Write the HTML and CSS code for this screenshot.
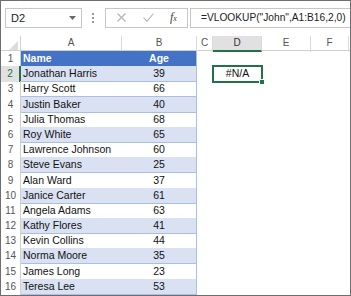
FILE: index.html
```html
<!DOCTYPE html>
<html lang="en">
<head>
    <meta charset="UTF-8">
    <title>VLOOKUP #N/A</title>
    <link rel="stylesheet" href="styles.css">
</head>
<body>
    <div class="window">
        <!-- name box + formula bar -->
        <div class="toolbar">
            <div class="namebox">
                <span>D2</span>
                <svg class="caret" width="7" height="4" viewBox="0 0 7 4"><path d="M0 0h7L3.5 4z" fill="#6a6a6a"/></svg>
            </div>
            <svg class="dots" width="2" height="10" viewBox="0 0 2 10">
                <rect x="0" y="0" width="2" height="2" fill="#9a9a9a"/>
                <rect x="0" y="4" width="2" height="2" fill="#9a9a9a"/>
                <rect x="0" y="8" width="2" height="2" fill="#9a9a9a"/>
            </svg>
            <div class="fbuttons">
                <svg width="9" height="9" viewBox="0 0 9 9"><path d="M0.5 0.5l8 8M8.5 0.5l-8 8" stroke="#b4b4b4" stroke-width="1.1" fill="none"/></svg>
                <svg width="11" height="9" viewBox="0 0 11 9"><path d="M0.5 4.5l3.5 3.8L10.5 0.5" stroke="#b4b4b4" stroke-width="1.1" fill="none"/></svg>
                <span class="fx">f<small>x</small></span>
            </div>
            <div class="formula">=VLOOKUP("John",A1:B16,2,0)</div>
        </div>

        <div class="sheet">
            <div class="row head">
                <div class="corner"></div>
                <div class="ch">A</div>
                <div class="ch">B</div>
                <div class="ch">C</div>
                <div class="ch active">D</div>
                <div class="ch">E</div>
                <div class="ch">F</div>
            </div>
            <div class="row">
                <div class="rh">1</div>
                <div class="cell th">Name</div>
                <div class="cell th num last">Age</div>
                <div></div><div></div><div></div><div></div>
            </div>
            <div class="row band">
                <div class="rh active">2</div>
                <div class="cell">Jonathan Harris</div>
                <div class="cell num last">39</div>
                <div></div>
                <div class="cell selected num">#N/A</div>
                <div></div><div></div>
            </div>
            <div class="row">
                <div class="rh">3</div>
                <div class="cell">Harry Scott</div>
                <div class="cell num last">66</div>
                <div></div><div></div><div></div><div></div>
            </div>
            <div class="row band">
                <div class="rh">4</div>
                <div class="cell">Justin Baker</div>
                <div class="cell num last">40</div>
                <div></div><div></div><div></div><div></div>
            </div>
            <div class="row">
                <div class="rh">5</div>
                <div class="cell">Julia Thomas</div>
                <div class="cell num last">68</div>
                <div></div><div></div><div></div><div></div>
            </div>
            <div class="row band">
                <div class="rh">6</div>
                <div class="cell">Roy White</div>
                <div class="cell num last">65</div>
                <div></div><div></div><div></div><div></div>
            </div>
            <div class="row">
                <div class="rh">7</div>
                <div class="cell">Lawrence Johnson</div>
                <div class="cell num last">60</div>
                <div></div><div></div><div></div><div></div>
            </div>
            <div class="row band">
                <div class="rh">8</div>
                <div class="cell">Steve Evans</div>
                <div class="cell num last">25</div>
                <div></div><div></div><div></div><div></div>
            </div>
            <div class="row">
                <div class="rh">9</div>
                <div class="cell">Alan Ward</div>
                <div class="cell num last">37</div>
                <div></div><div></div><div></div><div></div>
            </div>
            <div class="row band">
                <div class="rh">10</div>
                <div class="cell">Janice Carter</div>
                <div class="cell num last">61</div>
                <div></div><div></div><div></div><div></div>
            </div>
            <div class="row">
                <div class="rh">11</div>
                <div class="cell">Angela Adams</div>
                <div class="cell num last">63</div>
                <div></div><div></div><div></div><div></div>
            </div>
            <div class="row band">
                <div class="rh">12</div>
                <div class="cell">Kathy Flores</div>
                <div class="cell num last">41</div>
                <div></div><div></div><div></div><div></div>
            </div>
            <div class="row">
                <div class="rh">13</div>
                <div class="cell">Kevin Collins</div>
                <div class="cell num last">44</div>
                <div></div><div></div><div></div><div></div>
            </div>
            <div class="row band">
                <div class="rh">14</div>
                <div class="cell">Norma Moore</div>
                <div class="cell num last">35</div>
                <div></div><div></div><div></div><div></div>
            </div>
            <div class="row">
                <div class="rh">15</div>
                <div class="cell">James Long</div>
                <div class="cell num last">23</div>
                <div></div><div></div><div></div><div></div>
            </div>
            <div class="row band">
                <div class="rh">16</div>
                <div class="cell">Teresa Lee</div>
                <div class="cell num last">53</div>
                <div></div><div></div><div></div><div></div>
            </div>
        </div>
    </div>
</body>
</html>
```

FILE: styles.css
```css
*, *::before, *::after {
    box-sizing: border-box;
}

body {
    margin: 0;
    background: #fff;
    font-family: "Liberation Sans", Arial, sans-serif;
}

.window {
    width: 351px;
    height: 296px;
    border: 1px solid #6e6e6e;
    overflow: hidden;
    background: #fff;
}

/* name box and formula bar */
.toolbar {
    display: flex;
    align-items: center;
    height: 35px;
    padding: 6px 0 8px 4px;
}

.namebox {
    display: flex;
    align-items: center;
    justify-content: space-between;
    width: 77px;
    height: 20px;
    padding: 0 5px 0 5px;
    border: 1px solid #c6c6c6;
    font-size: 11px;
    color: #222;
}

.dots {
    margin: 0 11px 0 10px;
}

.fbuttons {
    display: flex;
    align-items: center;
    width: 83px;
    height: 20px;
    padding-left: 11px;
    gap: 17px;
    border: 1px solid #c6c6c6;
}

.fx {
    margin-left: -1px;
    font: italic 12px "Liberation Serif", serif;
    color: #444;
}

.fx small {
    font-size: 8px;
}

.formula {
    flex: 1;
    height: 20px;
    margin-left: 2px;
    padding: 3px 0 0 10px;
    border: 1px solid #c6c6c6;
    border-right: none;
    font-size: 10.2px;
    color: #222;
    white-space: nowrap;
}

/* the grid */
.row {
    display: grid;
    grid-template-columns: 20px 101px 75px 16px 49px 49px 38px;
    height: 15.2px;
}

.row.head {
    height: 15px;
    border-bottom: 1px solid #d0d0d0;
}

.corner {
    position: relative;
    border-right: 1px solid #d0d0d0;
}

.corner::after {
    content: "";
    position: absolute;
    right: 2px;
    bottom: 2px;
    border-style: solid;
    border-width: 0 0 9px 9px;
    border-color: transparent transparent #dcdcdc transparent;
}

.ch {
    border-right: 1px solid #dadada;
    font-size: 10px;
    line-height: 14px;
    text-align: center;
    color: #555;
}

.ch.active {
    background: #e1e1e1;
    border-bottom: 2px solid #217346;
    color: #333;
}

.rh {
    border-right: 1px solid #d0d0d0;
    font-size: 10px;
    line-height: 15px;
    text-align: center;
    color: #555;
}

.rh.active {
    background: #e1e1e1;
    border-right: 2px solid #217346;
    color: #217346;
}

.cell {
    position: relative;
    padding-left: 2px;
    font-size: 10.5px;
    line-height: 15px;
    color: #111;
    white-space: nowrap;
}

.row > .cell:nth-child(2),
.row > .cell:nth-child(3) {
    border-bottom: 1px solid #a9bfe4;
}

.band > .cell:nth-child(2),
.band > .cell:nth-child(3) {
    background: #d9e1f2;
}

.cell.num {
    padding-left: 0;
    text-align: center;
}

.cell.last {
    border-right: 1px solid #a9bfe4;
}

.cell.th {
    background: #4472c4;
    font-weight: bold;
    color: #fff;
}

.band > .cell.selected {
    background: #fff;
    border: none;
}

/* active cell outline and fill handle */
.selected::after {
    content: "";
    position: absolute;
    inset: -1px -1px -1px -1px;
    border: 2px solid #217346;
}

.selected::before {
    content: "";
    position: absolute;
    right: -3px;
    bottom: -3px;
    z-index: 1;
    width: 6px;
    height: 6px;
    background: #217346;
    border: 1px solid #fff;
}
```
